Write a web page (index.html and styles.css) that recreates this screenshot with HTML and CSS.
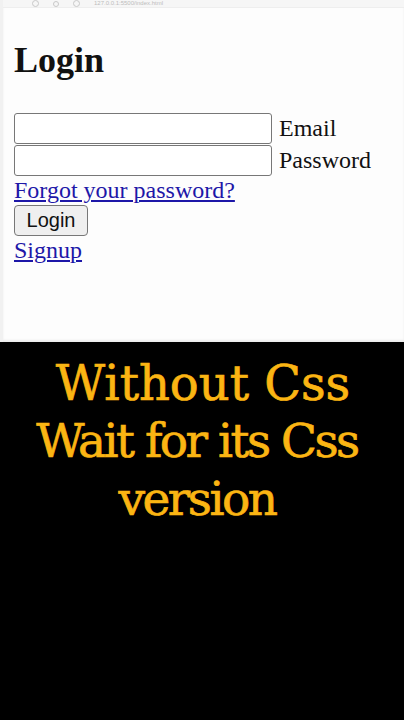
FILE: index.html
```html
<!DOCTYPE html>
<html lang="en">
<head>
<meta charset="utf-8">
<title>Login</title>
<link rel="stylesheet" href="styles.css">
</head>
<body>
<div class="browser">
  <div class="toolbar">
    <span class="tb-icon"></span>
    <span class="tb-icon small"></span>
    <span class="tb-icon"></span>
    <span class="tb-url">127.0.0.1:5500/index.html</span>
  </div>
  <div class="page">
    <h1 class="title">Login</h1>
    <form class="form">
      <div class="row"><input class="field" type="text"><span class="label">Email</span></div>
      <div class="row"><input class="field" type="password"><span class="label">Password</span></div>
      <div class="line"><a class="link" href="#">Forgot your password?</a></div>
      <div class="btn-row"><button class="btn" type="button">Login</button></div>
      <div class="line"><a class="link" href="#">Signup</a></div>
    </form>
  </div>
</div>
<div class="promo">
  <p class="promo-line first">Without Css</p>
  <p class="promo-line">Wait for its Css</p>
  <p class="promo-line">version</p>
</div>
</body>
</html>
```
FILE: styles.css
```css
html, body {
  margin: 0;
  padding: 0;
}
body {
  width: 404px;
  height: 720px;
  overflow: hidden;
  background: #000;
}
.browser {
  height: 342px;
  background: #fdfdfd;
  border-left: 3px solid #f1f1f1;
  box-sizing: border-box;
  box-shadow: inset 0 -2px 2px #ececec;
}
.toolbar {
  height: 7px;
  background: #f6f6f6;
  display: flex;
  align-items: center;
  gap: 14px;
  padding-left: 29px;
  overflow: hidden;
  border-bottom: 1px solid #eeeeee;
}
.tb-icon {
  width: 5px;
  height: 5px;
  border: 1px solid #c8c8c8;
  border-radius: 50%;
}
.tb-icon.small {
  width: 4px;
  height: 4px;
}
.tb-url {
  font-family: "Liberation Sans", sans-serif;
  font-size: 6px;
  line-height: 7px;
  color: #bdbdbd;
}
.page {
  padding-left: 11px;
}
.title {
  margin: 32px 0 0;
  font-family: "Liberation Serif", serif;
  font-size: 36px;
  font-weight: bold;
  line-height: 40px;
  color: #111;
}
.form {
  margin-top: 32px;
  font-family: "Liberation Serif", serif;
  font-size: 24px;
  color: #111;
}
.row {
  display: flex;
  align-items: center;
  height: 32px;
  gap: 7px;
}
.field {
  width: 258px;
  height: 31px;
  box-sizing: border-box;
  margin: 0;
  border: 1.5px solid #777;
  border-radius: 3px;
  background: #fff;
}
.label {
  line-height: 28px;
}
.line {
  height: 28px;
  line-height: 28px;
}
.link {
  color: #1d17a8;
  text-decoration: underline;
  text-decoration-thickness: 1.5px;
  text-underline-offset: 2px;
}
.btn-row {
  height: 32px;
  display: flex;
  align-items: center;
}
.btn {
  width: 74px;
  height: 31px;
  box-sizing: border-box;
  margin: 0;
  padding: 0;
  font-family: "Liberation Sans", Arial, sans-serif;
  font-size: 20px;
  color: #111;
  background: #efefef;
  border: 1.5px solid #777;
  border-radius: 4px;
}
.promo {
  height: 378px;
  background: #000;
  padding: 12px 10px 0 0;
  box-sizing: border-box;
}
.promo-line {
  margin: 0;
  text-align: center;
  font-family: "DejaVu Serif", serif;
  font-size: 47px;
  line-height: 58px;
  color: #fbb513;
  letter-spacing: -2.5px;
  -webkit-text-stroke: 0.7px #fbb513;
}
.promo-line.first {
  font-size: 48px;
  letter-spacing: 0;
  padding-left: 12px;
}
```
